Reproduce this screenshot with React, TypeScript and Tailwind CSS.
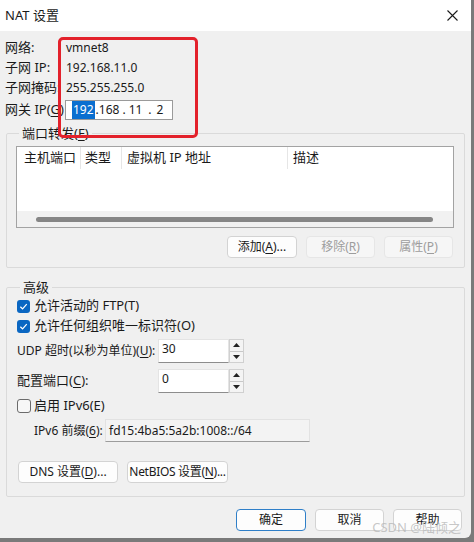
import React from 'react';

const font = { fontFamily: '"Noto Sans", "Noto Sans CJK SC", sans-serif' };

const Btn: React.FC<{ label: React.ReactNode; w: string; disabled?: boolean; primary?: boolean }> = ({ label, w, disabled, primary }) => (
  <div
    className={`${w} h-[22px] flex items-center justify-center whitespace-nowrap rounded-[4px] text-[12px] leading-none ${
      disabled
        ? 'bg-[#f6f6f6] border border-[#e6e6e6] text-[#9d9d9d]'
        : primary
        ? 'bg-[#fdfdfd] border-[1.5px] border-[#2f7fc8] text-[#1a1a1a]'
        : 'bg-[#fdfdfd] border border-[#d3d3d3] text-[#1a1a1a]'
    }`}
  >
    {label}
  </div>
);

const Check: React.FC<{ checked?: boolean }> = ({ checked }) =>
  checked ? (
    <div className="w-[13px] h-[13px] rounded-[3px] bg-[#0a67c2] flex items-center justify-center">
      <svg width="9" height="9" viewBox="0 0 10 10">
        <path d="M1.5 5.2 L4 7.6 L8.6 2.4" fill="none" stroke="#fff" strokeWidth="1.4" />
      </svg>
    </div>
  ) : (
    <div className="w-[14px] h-[14px] rounded-[3px] border border-[#6b6b6b] bg-[#f7f7f7]" />
  );

const Spinner: React.FC<{ value: string }> = ({ value }) => (
  <div className="w-[86px] h-[24px] flex">
    <div className="flex-1 bg-white border border-[#e4e4e4] border-b-[#8d8d8d] pl-[3px] pt-[1px] text-[12px] leading-[16px]">{value}</div>
    <div className="w-[15px] flex flex-col bg-[#e6e6e6] border border-[#d0d0d0]">
      <div className="flex-1 flex items-center justify-center border-b border-[#c8c8c8] bg-[#f4f4f4]">
        <svg width="7" height="4" viewBox="0 0 7 4"><path d="M0 4 L3.5 0 L7 4 Z" fill="#222" /></svg>
      </div>
      <div className="flex-1 flex items-center justify-center bg-[#f4f4f4]">
        <svg width="7" height="4" viewBox="0 0 7 4"><path d="M0 0 L3.5 4 L7 0 Z" fill="#222" /></svg>
      </div>
    </div>
  </div>
);

const U: React.FC<{ c: string }> = ({ c }) => <span className="underline underline-offset-2">{c}</span>;

export default function App() {
  return (
    <div className="w-[474px] h-[542px] bg-[#7a7a7a] overflow-hidden text-[#1a1a1a]" style={font}>
      <div className="w-[471px] h-[538px] bg-[#f0f0f0] rounded-br-[6px] flex flex-col">
        {/* title bar */}
        <div className="h-[31px] bg-white flex items-center justify-between pl-[5px] pr-[13px]">
          <span className="text-[13px]">NAT 设置</span>
          <svg width="11" height="11" viewBox="0 0 11 11">
            <path d="M0.5 0.5 L10.5 10.5 M10.5 0.5 L0.5 10.5" stroke="#1a1a1a" strokeWidth="1.1" />
          </svg>
        </div>

        <div className="relative flex-1 flex flex-col text-[12px]">
          {/* annotation */}
          <div className="absolute left-[58px] top-[6px] w-[140px] h-[101px] border-[3px] border-[#e3212b] rounded-[5px] pointer-events-none z-10" />

          {/* network info */}
          <div className="pl-[5px] pt-[7px] flex flex-col">
            <div className="h-[20px] flex items-center">
              <span className="w-[61px] text-[13px]">网络:</span>
              <span>vmnet8</span>
            </div>
            <div className="h-[20px] flex items-center">
              <span className="w-[61px] text-[13px]">子网 IP:</span>
              <span>192.168.11.0</span>
            </div>
            <div className="h-[20px] flex items-center">
              <span className="w-[61px] text-[13px]">子网掩码:</span>
              <span>255.255.255.0</span>
            </div>
            <div className="mt-[2px] h-[20px] flex items-center">
              <span className="w-[60px] text-[13px]">网关 IP(<U c="G" />)</span>
              <div className="w-[108px] h-[20px] bg-white border border-[#9a9a9a] flex items-center pl-[6px] text-[12px]">
                <span className="bg-[#0a6fd0] text-white px-[1px]">192</span>
                <span className="ml-[1px]">.168</span>
                <span className="ml-[3px]">.</span>
                <span className="ml-[3px]">11</span>
                <span className="ml-[6px]">.</span>
                <span className="ml-[5px]">2</span>
              </div>
            </div>
          </div>

          {/* port forwarding */}
          <fieldset className="mt-[6px] mx-[6px] border border-[#dadada] rounded-[2px] pl-[9px] pr-[10px] pt-[6px] pb-[9px]">
            <legend className="ml-[3px] px-[3px] text-[13px] leading-[14px]">端口转发(<U c="F" />)</legend>
            <div className="h-[82px] bg-white border border-[#a3a3a3] flex flex-col">
              <div className="h-[22px] flex text-[13px]">
                <div className="w-[64px] pl-[7px] flex items-center border-r border-[#e6e6e6]">主机端口</div>
                <div className="w-[41px] pl-[4px] flex items-center border-r border-[#e6e6e6]">类型</div>
                <div className="w-[166px] pl-[5px] flex items-center border-r border-[#e6e6e6]">虚拟机 IP 地址</div>
                <div className="flex-1 pl-[5px] flex items-center">描述</div>
              </div>
              <div className="flex-1" />
              <div className="h-[16px] bg-[#f1f1f1] flex items-center pl-[19px] pr-[20px]">
                <div className="h-[5px] w-full rounded-full bg-[#868686]" />
              </div>
            </div>
            <div className="mt-[8px] flex justify-end gap-[9px] pr-[1px]">
              <Btn w="w-[70px]" label={<span>添加(<U c="A" />)...</span>} />
              <Btn w="w-[69px]" disabled label={<span>移除(<U c="R" />)</span>} />
              <Btn w="w-[69px]" disabled label={<span>属性(<U c="P" />)</span>} />
            </div>
          </fieldset>

          {/* advanced */}
          <fieldset className="mt-[12px] mx-[6px] border border-[#dadada] rounded-[2px] pl-[10px] pr-[10px] pt-[2px] pb-[13px]">
            <legend className="ml-[3px] px-[3px] text-[13px] leading-[14px]">高级</legend>
            <div className="h-[20px] flex items-center gap-[4px] text-[13px]">
              <Check checked />
              <span>允许活动的 FTP(T)</span>
            </div>
            <div className="h-[20px] flex items-center gap-[4px] text-[13px]">
              <Check checked />
              <span>允许任何组织唯一标识符(O)</span>
            </div>
            <div className="mt-[3px] h-[24px] flex items-center">
              <span className="w-[141px]">UDP 超时(以秒为单位)(<U c="U" />):</span>
              <Spinner value="30" />
            </div>
            <div className="mt-[6px] h-[24px] flex items-center">
              <span className="w-[141px] text-[13px]">配置端口(<U c="C" />):</span>
              <Spinner value="0" />
            </div>
            <div className="mt-[3px] h-[20px] flex items-center gap-[3px] text-[13px]">
              <Check />
              <span>启用 IPv6(E)</span>
            </div>
            <div className="mt-[3px] h-[23px] flex items-center pl-[17px]">
              <span className="w-[71px]">IPv6 前缀(<U c="6" />):</span>
              <div className="w-[205px] h-[23px] bg-[#f3f3f3] border border-[#e2e2e2] border-b-[#9c9c9c] flex items-center pl-[3px]">
                fd15:4ba5:5a2b:1008::/64
              </div>
            </div>
            <div className="mt-[19px] flex gap-[9px] pl-[1px]">
              <Btn w="w-[100px]" label={<span>DNS 设置(<U c="D" />)...</span>} />
              <Btn w="w-[101px]" label={<span className="tracking-[-0.3px]">NetBIOS 设置(<U c="N" />)...</span>} />
            </div>
          </fieldset>

          {/* dialog buttons */}
          <div className="mt-[12px] flex justify-end gap-[9px] pr-[9px] text-[13px]">
            <Btn w="w-[70px]" primary label="确定" />
            <Btn w="w-[69px]" label="取消" />
            <Btn w="w-[69px]" label="帮助" />
          </div>

          <div className="absolute right-[10px] bottom-[1px] text-[13px] text-[#b8b8b8]/80 pointer-events-none">
            CSDN @陆倾之
          </div>
        </div>
      </div>
    </div>
  );
}
